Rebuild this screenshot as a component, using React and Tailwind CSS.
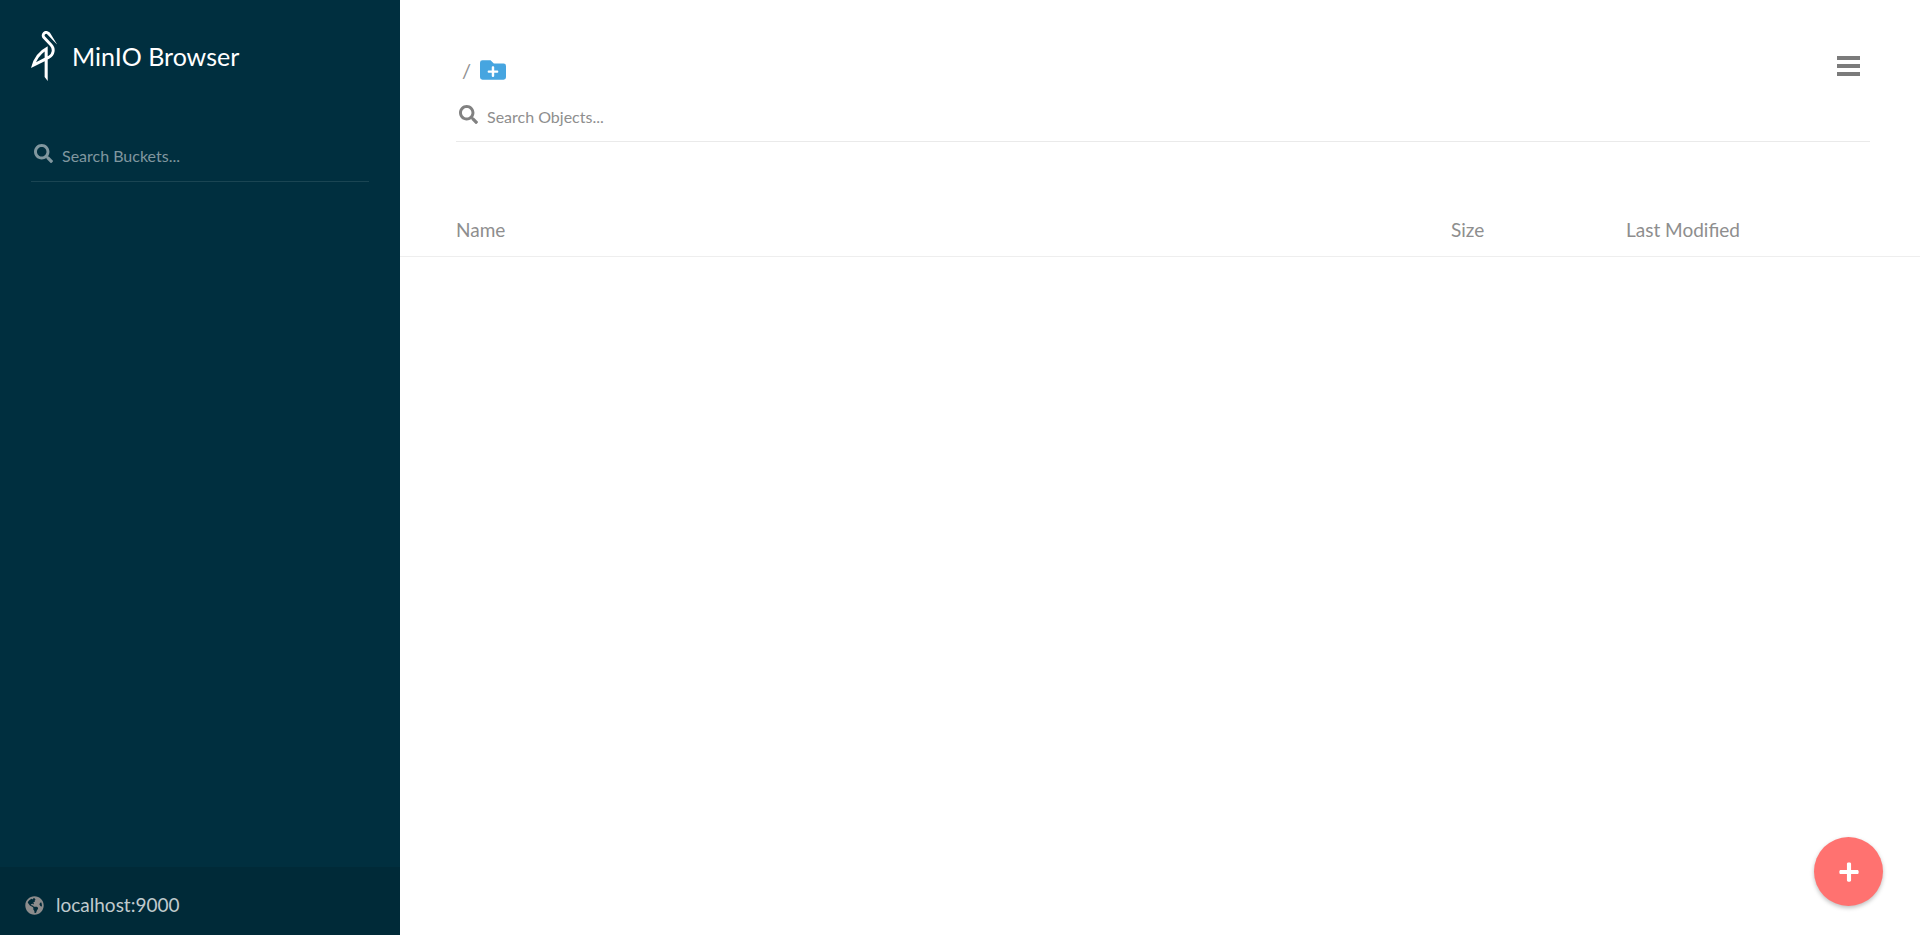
// src/App.jsx
import { useState } from 'react';
import { FaSearch, FaFolderPlus, FaPlus, FaGlobeAmericas } from 'react-icons/fa';
import { SiMinio } from 'react-icons/si';

const Sidebar = ({ filter, onFilterChange }) => (
  <aside className="w-[400px] shrink-0 flex flex-col bg-[#002f3f]">
    <div className="flex items-center px-[31px] pt-[31px]">
      <SiMinio className="w-[50px] h-[50px] -mx-3 text-white" />
      <h2 className="ml-[15px] text-[25px] leading-8 text-white">MinIO Browser</h2>
    </div>

    <label className="flex items-center gap-[9px] mx-[31px] mt-[51px] h-[50px] px-[3px] pb-0.5 border-b border-[#1a4553]">
      <FaSearch className="size-[19px] mb-1 text-[#80979f]" />
      <input
        type="text"
        placeholder="Search Buckets..."
        aria-label="Search Buckets"
        value={filter}
        onChange={(e) => onFilterChange(e.target.value)}
        className="flex-1 text-base text-white placeholder:text-[#80979f] outline-none"
      />
    </label>

    <footer className="mt-auto h-[68px] flex items-center gap-3 px-[25px] pt-1 bg-[#002a38]">
      <FaGlobeAmericas className="size-[19px] mt-1 text-[#8c8c8c]" />
      <a href="/" className="pt-1 text-[19px] leading-7 text-[#c0cbce]">localhost:9000</a>
    </footer>
  </aside>
);

const MenuIcon = () => (
  <svg viewBox="0 0 23 20" className="w-[23px] h-5" fill="currentColor">
    <rect y="0" width="23" height="4" />
    <rect y="8" width="23" height="4" />
    <rect y="16" width="23" height="4" />
  </svg>
);

export default function App() {
  const [bucketFilter, setBucketFilter] = useState('');
  const [objectFilter, setObjectFilter] = useState('');

  return (
    <div className="flex min-h-screen bg-white font-['Lato',sans-serif]">
      <Sidebar filter={bucketFilter} onFilterChange={setBucketFilter} />

      <main className="flex-1">
        <header className="pl-14 pr-[50px] pt-14">
          <div className="flex items-start justify-between">
            <div className="flex items-center gap-[9px] pl-1.5 text-xl text-[#8e8e8e]">
              <span>/</span>
              <button type="button" aria-label="Create bucket" className="text-[#46a5e0]">
                <FaFolderPlus className="size-[26px]" />
              </button>
            </div>
            <button type="button" aria-label="Menu" className="mr-[10px] text-[#7b7b7b]">
              <MenuIcon />
            </button>
          </div>

          <label className="flex items-center gap-[9px] mt-2 h-[50px] px-[3px] border-b border-[#eaeaea]">
            <FaSearch className="size-[19px] mb-1 text-[#818181]" />
            <input
              type="text"
              placeholder="Search Objects..."
              aria-label="Search Objects"
              value={objectFilter}
              onChange={(e) => setObjectFilter(e.target.value)}
              className="flex-1 text-base text-[#8e8e8e] placeholder:text-[#8e8e8e] outline-none"
            />
          </label>
        </header>

        <table className="w-full mt-[61px] table-fixed text-left text-[19px] text-[#8e8e8e]">
          <thead>
            <tr className="h-[53px] border-b border-[#eeeeee]">
              <th scope="col" className="pl-14 pt-0.5 font-normal">Name</th>
              <th scope="col" className="w-[175px] pt-0.5 font-normal">Size</th>
              <th scope="col" className="w-[294px] pt-0.5 font-normal">Last Modified</th>
            </tr>
          </thead>
          <tbody />
        </table>
      </main>

      <button
        type="button"
        aria-label="Upload"
        className="fixed right-[37px] bottom-[29px] size-[69px] flex items-center justify-center rounded-full bg-[#ff7270] text-white shadow-[0_2px_4px_rgba(0,0,0,0.25)]"
      >
        <FaPlus className="size-[22px]" />
      </button>
    </div>
  );
}
